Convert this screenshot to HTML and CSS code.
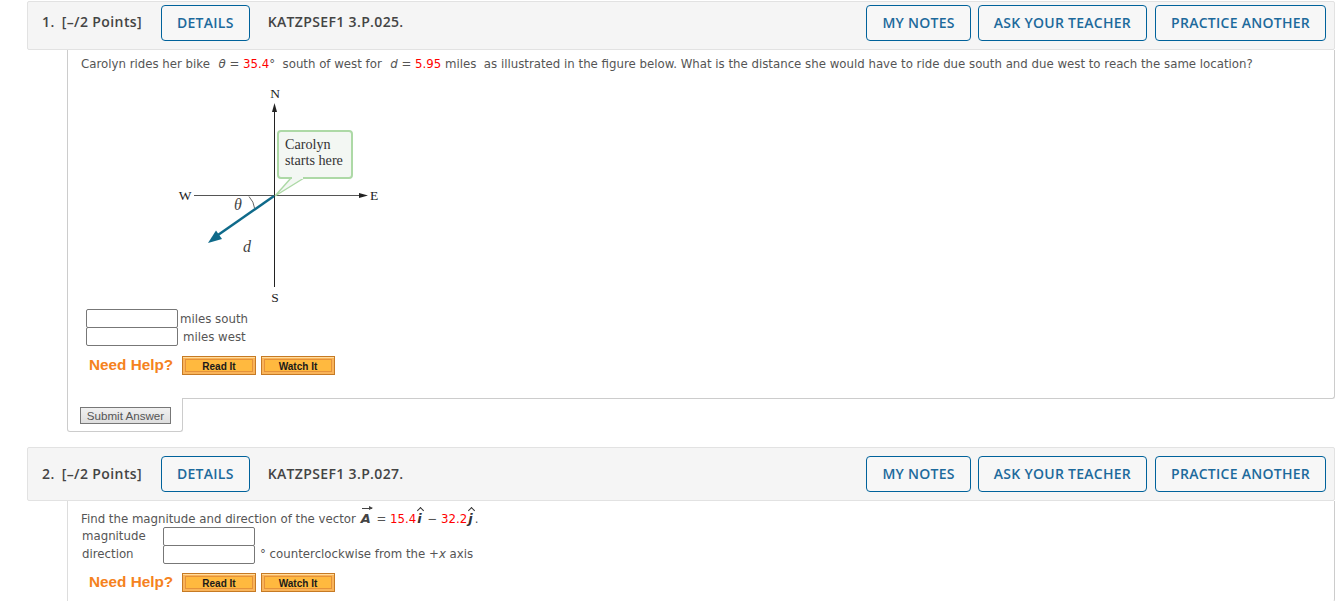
FILE: index.html
```html
<!DOCTYPE html>
<html lang="en">
<head>
    <meta charset="UTF-8">
    <title>Assignment</title>
    <link rel="stylesheet" href="styles.css">
</head>
<body>
    <div class="question">
        <div class="q-head q-head-first">
            <span class="q-points"><span class="q-num">1.</span>[–/2 Points]</span>
            <button class="outline-btn">DETAILS</button>
            <span class="q-code">KATZPSEF1 3.P.025.</span>
            <div class="q-actions">
                <button class="outline-btn">MY NOTES</button>
                <button class="outline-btn">ASK YOUR TEACHER</button>
                <button class="outline-btn">PRACTICE ANOTHER</button>
            </div>
        </div>
        <div class="q-body">
            <p class="q-text">Carolyn rides her bike <i class="var">&nbsp;θ</i> = <span class="val">35.4</span>°&nbsp; south of west for <i class="var">&nbsp;d</i> = <span class="val">5.95</span> miles&nbsp; as illustrated in the figure below. What is the distance she would have to ride due south and due west to reach the same location?</p>

            <svg class="figure" width="240" height="230" viewBox="160 80 240 230">
                <line x1="194" y1="195.5" x2="362" y2="195.5" stroke="#555" stroke-width="1"/>
                <polygon points="368,195.5 359,193 359,198" fill="#222"/>
                <line x1="274.5" y1="109" x2="274.5" y2="287" stroke="#222" stroke-width="1"/>
                <polygon points="274.5,103 272,112 277,112" fill="#222"/>
                <path d="M275 196 L291 178 L304 178 Z" fill="#f3f7f3" stroke="#add9a6" stroke-width="1.4"/>
                <rect x="278" y="131" width="74" height="47" rx="3" fill="#f3f7f3" stroke="#add9a6" stroke-width="2"/>
                <path d="M292 178 L303 178" stroke="#f3f7f3" stroke-width="2"/>
                <path d="M249 196.5 Q254 202 254.5 208" fill="none" stroke="#666" stroke-width="1"/>
                <line x1="274" y1="196" x2="218" y2="235" stroke="#0f6a8a" stroke-width="2.5"/>
                <polygon points="208,243 216,230.5 222,239" fill="#0f6a8a"/>
                <text class="fig-label" x="275" y="97.5" text-anchor="middle">N</text>
                <text class="fig-label" x="275" y="301.5" text-anchor="middle">S</text>
                <text class="fig-label" x="185" y="199.5" text-anchor="middle">W</text>
                <text class="fig-label" x="374" y="199.5" text-anchor="middle">E</text>
                <text class="fig-note" x="285" y="148.5">Carolyn</text>
                <text class="fig-note" x="285" y="164.5">starts here</text>
                <text class="fig-var" x="238" y="210" text-anchor="middle">θ</text>
                <text class="fig-var" x="247" y="252" text-anchor="middle">d</text>
            </svg>

            <div class="answer-rows answer-rows-first">
                <div class="answer-row"><input class="answer" type="text"><span class="unit">miles south</span></div>
                <div class="answer-row"><input class="answer" type="text"><span class="unit unit-west">miles west</span></div>
            </div>

            <div class="help">
                <span class="help-label">Need Help?</span>
                <button class="help-btn">Read It</button>
                <button class="help-btn">Watch It</button>
            </div>
        </div>
        <div class="q-submit">
            <button class="submit-btn">Submit Answer</button>
        </div>
    </div>

    <div class="question question-second">
        <div class="q-head">
            <span class="q-points"><span class="q-num">2.</span>[–/2 Points]</span>
            <button class="outline-btn">DETAILS</button>
            <span class="q-code">KATZPSEF1 3.P.027.</span>
            <div class="q-actions">
                <button class="outline-btn">MY NOTES</button>
                <button class="outline-btn">ASK YOUR TEACHER</button>
                <button class="outline-btn">PRACTICE ANOTHER</button>
            </div>
        </div>
        <div class="q-body q-body-open">
            <p class="q-text">Find the magnitude and direction of the vector <b class="vec">A</b> = <span class="val">15.4</span><b class="hat">i</b> − <span class="val">32.2</span><b class="hat">j</b>.</p>
            <div class="answer-rows">
                <div class="answer-row"><span class="row-label">magnitude</span><input class="answer" type="text"></div>
                <div class="answer-row"><span class="row-label">direction</span><input class="answer" type="text"><span class="unit unit-deg">° counterclockwise from the +<i>x</i> axis</span></div>
            </div>
            <div class="help help-second">
                <span class="help-label">Need Help?</span>
                <button class="help-btn">Read It</button>
                <button class="help-btn">Watch It</button>
            </div>
        </div>
    </div>
</body>
</html>
```

FILE: styles.css
```css
html, body {
    height: 601px;
    overflow: hidden;
}

body {
    margin: 0;
    padding: 1px 2px 0 27px;
    font-family: "DejaVu Sans", sans-serif;
    font-size: 11.78px;
    color: #555;
    background-color: #fff;
}

.question-second {
    margin-top: 15px;
}

/* header bar */
.q-head {
    display: flex;
    align-items: center;
    height: 54px;
    box-sizing: border-box;
    padding: 0 8px 0 14px;
    background-color: #f5f5f5;
    border: 1px solid #e2e2e2;
    border-radius: 2px;
    font-family: "Open Sans", sans-serif;
    font-size: 14px;
    font-weight: 600;
    color: #444;
}

.q-head-first {
    height: 49px;
    align-items: flex-start;
    padding-top: 3px;
}

.q-head-first .q-points,
.q-head-first .q-code {
    line-height: 34px;
}

.q-num {
    margin-right: 7px;
}

.q-points {
    width: 119px;
    flex: none;
    padding-bottom: 2px;
    letter-spacing: 0.4px;
}

.q-code {
    margin-left: 18px;
    padding-bottom: 2px;
    letter-spacing: 0.35px;
}

.q-actions {
    display: flex;
    gap: 7px;
    margin-left: auto;
}

.q-actions .outline-btn:last-child {
    margin-left: 1px;
}

.outline-btn {
    height: 36px;
    padding: 0 15px 2px;
    background-color: #f7f7f7;
    border: 1px solid #00629b;
    border-radius: 4px;
    font-family: "Open Sans", sans-serif;
    font-size: 14px;
    font-weight: 600;
    letter-spacing: 0.27px;
    color: #1d6a9c;
}

/* question body */
.q-body {
    margin-left: 40px;
    height: 349px;
    box-sizing: border-box;
    padding: 6px 0 0 13px;
    border: 1px solid #ccc;
    border-top: none;
    border-bottom-right-radius: 3px;
}

.q-body-open {
    height: 101px;
    padding-top: 10px;
    border-bottom: none;
    border-left-color: #ddd;
}

.q-text {
    margin: 0;
    line-height: 16px;
    white-space: nowrap;
}

.var {
    margin-left: 1px;
}

.val {
    color: #f00;
}

.vec {
    position: relative;
    font-size: 13px;
    font-style: italic;
    color: #444;
    margin: 0 2px 0 1px;
}

.vec::before {
    content: "";
    position: absolute;
    left: 1px;
    top: -3px;
    width: 10px;
    height: 1px;
    background-color: #444;
}

.vec::after {
    content: "";
    position: absolute;
    left: 8px;
    top: -5px;
    border-left: 4px solid #444;
    border-top: 2.5px solid transparent;
    border-bottom: 2.5px solid transparent;
}

.hat {
    position: relative;
    font-size: 13px;
    font-style: italic;
    color: #333;
    margin: 0 2px 0 1px;
}

.hat::before {
    content: "";
    position: absolute;
    left: 1px;
    top: -3px;
    width: 4px;
    height: 4px;
    border-top: 1px solid #333;
    border-left: 1px solid #333;
    transform: rotate(45deg);
}

.figure {
    display: block;
    margin: 8px 0 0 79px;
}

.fig-label {
    font-family: "Liberation Serif", serif;
    font-size: 13.5px;
    fill: #222;
}

.fig-note {
    font-family: "Liberation Serif", serif;
    font-size: 14.2px;
    fill: #333;
}

.fig-var {
    font-family: "Liberation Serif", serif;
    font-size: 16px;
    font-style: italic;
    fill: #444;
}

/* answers */
.answer-rows {
    display: flex;
    flex-direction: column;
}

.answer-rows-first {
    margin: -1px 0 0 5px;
}

.answer-rows-first .unit {
    padding-top: 2px;
}

.answer-row {
    display: flex;
    align-items: center;
    height: 18px;
}

.answer {
    width: 92px;
    height: 19px;
    box-sizing: border-box;
    margin: 0;
    padding: 0;
    flex: none;
    background-color: #fff;
    border: 1px solid #777;
    border-radius: 2px;
}

.unit {
    margin-left: 2px;
}

.unit-west {
    margin-left: 5px;
}

.unit-deg {
    margin-left: 5px;
}

.row-label {
    width: 81px;
    margin-left: 1px;
    flex: none;
}

/* need help */
.help {
    display: flex;
    align-items: center;
    gap: 5px;
    margin: 11px 0 0 8px;
    height: 19px;
}

.help-second {
    margin-top: 10px;
}

.help-label {
    width: 88px;
    flex: none;
    padding-bottom: 2px;
    font-family: "Liberation Sans", sans-serif;
    font-size: 15.3px;
    font-weight: 700;
    color: #f58220;
}

.help-btn {
    width: 74px;
    height: 19px;
    padding: 2px 0 0;
    background-color: #ffb93f;
    border: 1px solid #c67a24;
    box-shadow: inset 0 1px 0 #ffdc9f, inset 0 0 0 2px #f9b45a, inset 0 0 0 3px #e5923a;
    font-family: "Liberation Sans", sans-serif;
    font-size: 10px;
    font-weight: 700;
    color: #1a1a1a;
}

/* submit tab */
.q-submit {
    width: 116px;
    height: 34px;
    box-sizing: border-box;
    margin: -1px 0 0 40px;
    padding: 9px 0 0 12px;
    border: 1px solid #ccc;
    border-top: none;
    border-radius: 0 0 3px 3px;
    background-color: #fff;
}

.submit-btn {
    display: block;
    width: 91px;
    height: 17px;
    padding: 0;
    background: linear-gradient(#f0f0f0, #dedede);
    border: 1px solid #777;
    font-family: "Liberation Sans", sans-serif;
    font-size: 11.6px;
    color: #555;
}
```
